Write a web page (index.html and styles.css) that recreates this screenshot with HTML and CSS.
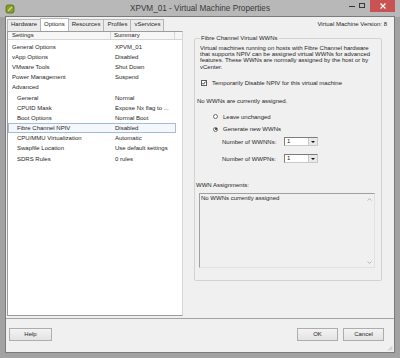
FILE: index.html
```html
<!DOCTYPE html>
<html lang="en">
<head>
    <meta charset="UTF-8">
    <title>XPVM_01 - Virtual Machine Properties</title>
    <link rel="stylesheet" href="styles.css">
</head>
<body>
    <div class="titlebar">
        <div class="tb-left">
            <svg class="app-icon" width="10" height="10" viewBox="0 0 10 10">
                <rect x="1" y="1" width="8" height="8" rx="2" fill="#809f2d" stroke="#566f1b" stroke-width="0.8"/>
                <path d="M3 7 L7 3" stroke="#e2d46c" stroke-width="1.4"/>
            </svg>
        </div>
        <div class="tb-title">XPVM_01 - Virtual Machine Properties</div>
        <div class="tb-controls">
            <span class="tb-min"></span>
            <span class="tb-max"></span>
            <span class="tb-close">
                <svg width="6" height="6" viewBox="0 0 6 6"><path d="M0.5 0.5 L5.5 5.5 M5.5 0.5 L0.5 5.5" stroke="#fff" stroke-width="1.2"/></svg>
            </span>
        </div>
    </div>

    <div class="client">
        <div class="tabrow">
            <div class="tabs">
                <span class="tab">Hardware</span>
                <span class="tab active">Options</span>
                <span class="tab">Resources</span>
                <span class="tab">Profiles</span>
                <span class="tab">vServices</span>
            </div>
            <div class="version">Virtual Machine Version: 8</div>
        </div>

        <div class="main">
            <div class="list">
                <div class="list-head">
                    <span class="h1">Settings</span>
                    <span class="h2">Summary</span>
                    <span class="h3"></span>
                </div>
                <div class="rows">
                    <div class="row"><span class="c1">General Options</span><span class="c2">XPVM_01</span></div>
                    <div class="row"><span class="c1">vApp Options</span><span class="c2">Disabled</span></div>
                    <div class="row"><span class="c1">VMware Tools</span><span class="c2">Shut Down</span></div>
                    <div class="row"><span class="c1">Power Management</span><span class="c2">Suspend</span></div>
                    <div class="row"><span class="c1">Advanced</span><span class="c2"></span></div>
                    <div class="row sub"><span class="c1">General</span><span class="c2">Normal</span></div>
                    <div class="row sub"><span class="c1">CPUID Mask</span><span class="c2">Expose Nx flag to ...</span></div>
                    <div class="row sub"><span class="c1">Boot Options</span><span class="c2">Normal Boot</span></div>
                    <div class="row sub sel"><span class="c1">Fibre Channel NPIV</span><span class="c2">Disabled</span></div>
                    <div class="row sub"><span class="c1">CPU/MMU Virtualization</span><span class="c2">Automatic</span></div>
                    <div class="row sub"><span class="c1">Swapfile Location</span><span class="c2">Use default settings</span></div>
                    <div class="row sub"><span class="c1">SDRS Rules</span><span class="c2">0 rules</span></div>
                </div>
            </div>

            <fieldset class="group">
                <legend>Fibre Channel Virtual WWNs</legend>
                <div class="desc">
                    Virtual machines running on hosts with Fibre Channel hardware<br>
                    that supports NPIV can be assigned virtual WWNs for advanced<br>
                    features. These WWNs are normally assigned by the host or by<br>
                    vCenter.
                </div>
                <div class="check-row">
                    <span class="checkbox">
                        <svg width="4" height="4" viewBox="0 0 4 4"><path d="M0.4 2 L1.5 3.2 L3.6 0.6" fill="none" stroke="#222" stroke-width="0.9"/></svg>
                    </span>
                    <span>Temporarily Disable NPIV for this virtual machine</span>
                </div>
                <div class="note">No WWNs are currently assigned.</div>
                <div class="radio-row first"><span class="radio"></span><span>Leave unchanged</span></div>
                <div class="radio-row second"><span class="radio on"></span><span>Generate new WWNs</span></div>
                <div class="num-row first">
                    <span class="num-label">Number of WWNNs:</span>
                    <span class="combo"><span class="combo-val">1</span><span class="combo-btn"></span></span>
                </div>
                <div class="num-row second">
                    <span class="num-label">Number of WWPNs:</span>
                    <span class="combo"><span class="combo-val">1</span><span class="combo-btn"></span></span>
                </div>
                <div class="assign-label">WWN Assignments:</div>
                <div class="assign-box">
                    <div class="assign-text">No WWNs currently assigned</div>
                    <div class="scroll">
                        <svg width="5" height="3" viewBox="0 0 5 3"><path d="M0.5 2.5 L2.5 0.6 L4.5 2.5" fill="none" stroke="#a8a8a8" stroke-width="0.8"/></svg>
                        <svg width="5" height="3" viewBox="0 0 5 3"><path d="M0.5 0.5 L2.5 2.4 L4.5 0.5" fill="none" stroke="#a8a8a8" stroke-width="0.8"/></svg>
                    </div>
                </div>
            </fieldset>
        </div>

        <div class="separator"></div>

        <div class="buttons">
            <span class="btn help">Help</span>
            <span class="spacer"></span>
            <span class="btn">OK</span>
            <span class="btn cancel">Cancel</span>
        </div>

        <div class="grip">
            <svg width="6" height="6" viewBox="0 0 6 6">
                <path d="M5.5 1 L1 5.5 M5.5 3 L3 5.5 M5.5 5 L5 5.5" stroke="#b0b0b0" stroke-width="0.8"/>
            </svg>
        </div>
    </div>
</body>
</html>
```

FILE: styles.css
```css
* {
    box-sizing: border-box;
}

body {
    margin: 0;
    width: 400px;
    height: 358px;
    overflow: hidden;
    background: #a2a2a2;
    font-family: "Liberation Sans", Arial, sans-serif;
    font-size: 6px;
    color: #262626;
}

/* title bar */
.titlebar {
    height: 17px;
    display: grid;
    grid-template-columns: 1fr auto 1fr;
    background: #b8b8b8;
}
.app-icon {
    display: block;
    margin: 4px 0 0 5px;
}
.tb-title {
    font-size: 8.2px;
    line-height: 18px;
    color: #3a3a3a;
}
.tb-controls {
    display: flex;
    justify-content: flex-end;
    align-items: flex-start;
    padding-right: 5px;
}
.tb-min {
    width: 6px;
    height: 1px;
    margin: 6px 4px 0 0;
    background: #333;
}
.tb-max {
    width: 6px;
    height: 5px;
    margin: 3px 5px 0 0;
    border: 1px solid #3a3a3a;
}
.tb-close {
    width: 25px;
    height: 12px;
    background: #c95353;
    display: flex;
    align-items: center;
    justify-content: center;
}
.tb-close svg {
    display: block;
}

/* dialog body */
.client {
    height: 335px;
    margin: 0 6px;
    background: #f0f0f0;
    display: flex;
    flex-direction: column;
    box-shadow: 0 0 0 1px #7b7b7b;
}

.tabrow {
    height: 14px;
    display: flex;
    justify-content: space-between;
    align-items: flex-end;
    padding: 0 7px 0 1px;
}
.tabs {
    display: flex;
    align-items: flex-end;
}
.tab {
    height: 12px;
    line-height: 9px;
    padding: 0 3px;
    border: 1px solid #b5b5b5;
    border-bottom: none;
    background: #ebebeb;
    margin-right: -1px;
}
.tab.active {
    height: 13px;
    line-height: 10px;
    background: #fff;
    position: relative;
    z-index: 1;
}
.version {
    align-self: flex-start;
    margin-top: 3px;
    line-height: 8px;
}

.main {
    height: 285px;
    display: flex;
    align-items: flex-start;
    padding-left: 1px;
}

/* settings list */
.list {
    width: 176px;
    height: 285px;
    background: #fff;
    border: 1px solid #9c9c9c;
    border-right-color: #d6d6d6;
}
.list-head {
    display: flex;
    height: 8px;
    line-height: 7px;
    background: #f6f6f6;
    border-bottom: 1px solid #d5d5d5;
}
.list-head .h1 {
    width: 103px;
    padding-left: 4px;
    border-right: 1px solid #d5d5d5;
}
.list-head .h2 {
    width: 64px;
    padding-left: 3px;
    border-right: 1px solid #d5d5d5;
}
.list-head .h3 {
    flex: 1;
}
.rows {
    padding-top: 1.6px;
}
.row {
    display: flex;
    width: 168px;
    height: 10.2px;
    line-height: 10.2px;
    white-space: nowrap;
}
.row .c1 {
    width: 107px;
    padding-left: 4px;
}
.row.sub .c1 {
    padding-left: 9px;
}
.row.sel {
    background: #f4f8fc;
    box-shadow: inset 0 0 0 1px #a3bcd8;
}

/* right group box */
.group {
    margin: 3.5px 0 0 11px;
    width: 188px;
    height: 246.5px;
    padding: 0 0 0 5px;
    border: 1px solid #d2d2d2;
    border-radius: 2px;
    min-width: 0;
}
.group legend {
    padding: 0 1px;
    line-height: 7px;
}
.desc {
    margin-top: 3px;
    line-height: 6.4px;
    white-space: nowrap;
}
.check-row {
    display: flex;
    align-items: center;
    height: 7px;
    margin: 8.9px 0 0 1px;
}
.checkbox {
    width: 6px;
    height: 6px;
    margin-right: 5px;
    border: 1px solid #5e5e5e;
    background: #fff;
    display: flex;
    align-items: center;
    justify-content: center;
}
.checkbox svg {
    display: block;
}
.note {
    margin: 12.2px 0 0 -3px;
    line-height: 7px;
}
.radio-row {
    display: flex;
    align-items: center;
    height: 7px;
    margin-left: 13px;
}
.radio-row.first {
    margin-top: 8px;
}
.radio-row.second {
    margin-top: 5.3px;
}
.radio {
    width: 5px;
    height: 5px;
    margin-right: 5px;
    border: 1px solid #6e6e6e;
    border-radius: 50%;
    background: #fff;
    display: flex;
    align-items: center;
    justify-content: center;
}
.radio.on::after {
    content: "";
    width: 2px;
    height: 2px;
    border-radius: 50%;
    background: #222;
}
.num-row {
    display: flex;
    align-items: center;
    height: 9px;
    margin-left: 22px;
}
.num-row.first {
    margin-top: 4.5px;
}
.num-row.second {
    margin-top: 8px;
}
.num-label {
    width: 62px;
}
.combo {
    width: 34px;
    height: 9px;
    display: flex;
    background: #fff;
    border: 1px solid;
    border-color: #7c7c7c #c9c9c9 #c9c9c9 #7c7c7c;
}
.combo-val {
    flex: 1;
    padding-left: 2px;
    line-height: 7px;
}
.combo-btn {
    width: 9px;
    background: #e8e8e8;
    border-left: 1px solid #c9c9c9;
    display: flex;
    align-items: center;
    justify-content: center;
}
.combo-btn::after {
    content: "";
    border-left: 2px solid transparent;
    border-right: 2px solid transparent;
    border-top: 2px solid #111;
}
.assign-label {
    margin: 18.5px 0 0 -4px;
    line-height: 7px;
}
.assign-box {
    width: 176px;
    height: 75px;
    margin: 4.5px 0 0 -1px;
    display: flex;
    border: 1px solid;
    border-color: #9f9f9f #e2e2e2 #e2e2e2 #9f9f9f;
}
.assign-text {
    flex: 1;
    padding: 0.5px 0 0 1px;
    line-height: 7px;
}
.scroll {
    width: 9px;
    display: flex;
    flex-direction: column;
    justify-content: space-between;
    align-items: center;
    padding: 4px 0 3px;
}
.scroll svg {
    display: block;
}

/* footer */
.separator {
    margin-top: 2px;
    height: 1px;
    background: #a3a3a3;
}
.buttons {
    display: flex;
    margin-top: 9px;
    padding: 0 10px 0 3px;
}
.btn {
    width: 41px;
    height: 13px;
    line-height: 11px;
    text-align: center;
    border: 1px solid #adadad;
    background: linear-gradient(#f3f3f3, #e3e3e3);
}
.btn.help {
    width: 43px;
}
.btn.cancel {
    margin-left: 5px;
}
.spacer {
    flex: 1;
}
.grip {
    margin-top: auto;
    align-self: flex-end;
    padding: 0 1px 1px 0;
}
.grip svg {
    display: block;
}
```
